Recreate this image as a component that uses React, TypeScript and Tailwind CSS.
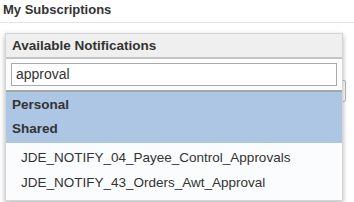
import React from 'react';

const groups = ['Personal', 'Shared'];
const items = ['JDE_NOTIFY_04_Payee_Control_Approvals', 'JDE_NOTIFY_43_Orders_Awt_Approval'];

export default function App() {
  return (
    <div className="relative h-[202px] w-[354px] overflow-hidden bg-white font-['Liberation_Sans',Arial,sans-serif] text-[#333]">
      <div className="px-[3px] pt-[1px] text-[13px] font-bold leading-[18px]">My Subscriptions</div>
      <div className="mt-[3px] h-px bg-[#e4e4e4]" />
      {/* select behind the popup */}
      <div className="absolute left-[300px] top-[80px] h-[22px] w-[46px] rounded-[2px] border border-[#bbb] bg-white" />
      <div className="relative ml-[5px] mt-[10px] w-[338px] border border-[#d6d6d6] bg-[#fbfcfd] shadow-[0_2px_5px_rgba(0,0,0,0.3)]">
        <div className="h-[25px] border-b-2 border-[#c4c4c4] bg-[#efefef] pl-[6px] text-[13.5px] font-bold leading-[24px]">
          Available Notifications
        </div>
        <div className="px-[5px] pb-[4px] pt-[4px]">
          <div className="h-[23px] border border-[#a9a9a9] bg-white pl-[4px] text-[14px] leading-[21px]">approval</div>
        </div>
        <div className="border-t-2 border-[#a6a6a6] bg-[#adc6e4] pb-[2px] pt-[1px]">
          {groups.map(g => (
            <div key={g} className="h-[24px] pl-[6px] text-[13.5px] font-bold leading-[24px]">{g}</div>
          ))}
        </div>
        <div className="pb-[5px] pt-[2px]">
          {items.map(i => (
            <div key={i} className="h-[25px] pl-[15px] text-[13.5px] leading-[25px]">{i}</div>
          ))}
        </div>
      </div>
    </div>
  );
}
